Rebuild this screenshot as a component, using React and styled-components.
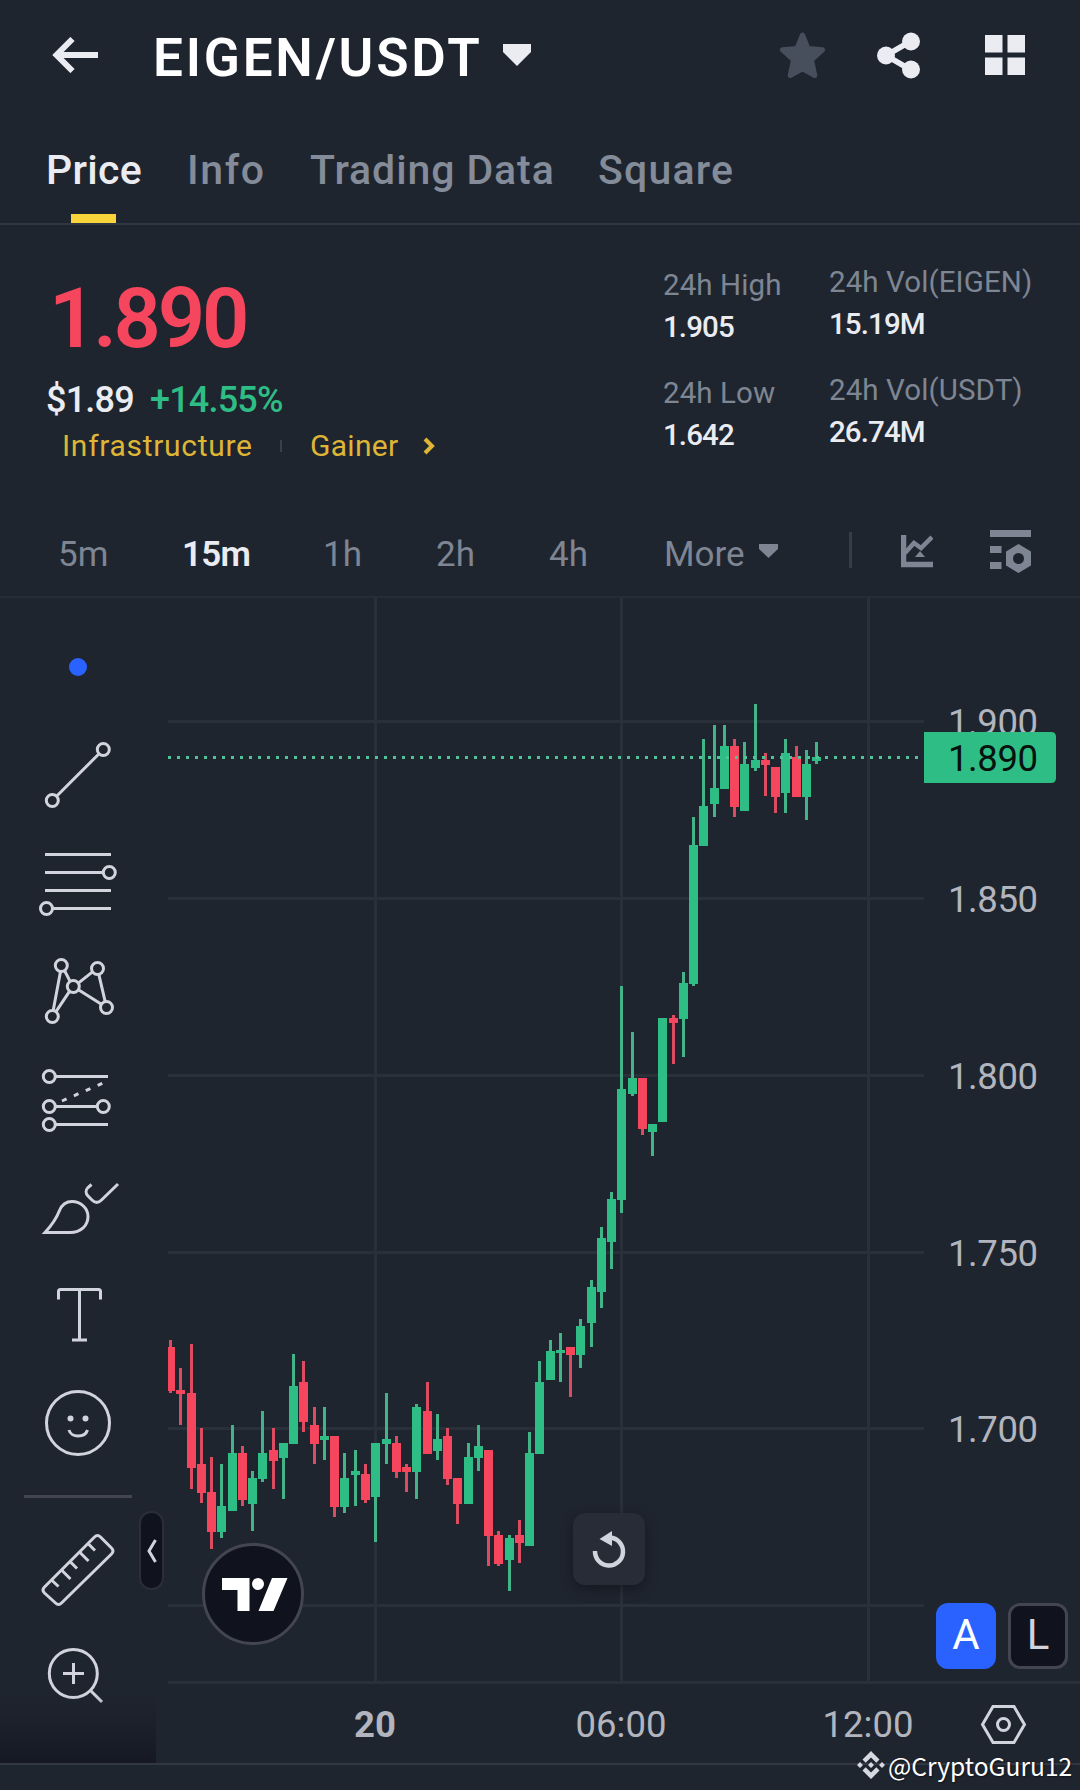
import React, { useState } from 'react';
import styled, { createGlobalStyle } from 'styled-components';

const GlobalStyle = createGlobalStyle`
  * {
    box-sizing: border-box;
  }

  body {
    margin: 0;
    background: #1f252f;
    font-family: Roboto, 'Liberation Sans', sans-serif;
  }

  svg {
    display: block;
  }
`;

const Screen = styled.main`
  position: relative;
  width: 1080px;
  height: 1790px;
  overflow: hidden;
  background: #1f252f;
  color: #eaecf2;
`;

const Header = styled.header`
  display: flex;
  align-items: center;
  height: 110px;
  padding: 0 55px 0 52px;
`;

const Title = styled.h1`
  width: 350px;
  margin: 5px 0 0 54px;
  color: #fff;
  font-size: 53px;
  font-weight: 600;
  line-height: 60px;
  letter-spacing: 2.8px;
  white-space: nowrap;
`;

const HeaderActions = styled.div`
  display: flex;
  align-items: center;
  margin-left: auto;

  svg + svg {
    margin-left: 52px;
  }

  svg:last-child {
    margin-left: 65px;
  }
`;

const Tabs = styled.nav`
  display: grid;
  grid-template-columns: 141px 123px 288px auto;
  height: 115px;
  padding-left: 46px;
  border-bottom: 2px solid #303742;
`;

const Tab = styled.div`
  display: flex;
  flex-direction: column;
  justify-content: space-between;
  padding-top: 35px;
  color: ${props => (props.$active ? '#eaecf2' : '#848b99')};
  font-size: 41px;
  font-weight: 500;
  line-height: 50px;
  letter-spacing: ${props => props.$spacing}px;
  white-space: nowrap;

  &::after {
    content: '';
    width: 45px;
    height: 9px;
    margin-left: 25px;
    background: ${props => (props.$active ? '#f8d33a' : 'transparent')};
  }
`;

const Summary = styled.section`
  display: grid;
  grid-template-columns: 663px 166px auto;
  height: 285px;
`;

const PriceBlock = styled.div`
  padding: 54px 0 0 46px;
`;

const LastPrice = styled.div`
  padding-left: 3px;
  color: #f6465d;
  font-size: 83px;
  font-weight: 600;
  line-height: 80px;
  letter-spacing: -3.2px;
`;

const PriceChange = styled.div`
  display: flex;
  margin-top: 21px;
  font-size: 36px;
  font-weight: 500;
  line-height: 40px;
  letter-spacing: -0.8px;
`;

const Fiat = styled.span`
  width: 104px;
`;

const Percent = styled.span`
  color: #2ebd85;
`;

const Tags = styled.div`
  display: flex;
  align-items: center;
  margin: 8px 0 0 16px;
  color: #deb535;
  font-size: 30px;
  line-height: 36px;
`;

const Tag = styled.span`
  width: ${props => props.$width}px;
  letter-spacing: ${props => props.$spacing}px;
`;

const TagDivider = styled.span`
  width: 2px;
  height: 12px;
  margin-right: 28px;
  background: #3a404b;
`;

const StatColumn = styled.div`
  padding-top: ${props => props.$top}px;
`;

const Stat = styled.div`
  margin-bottom: 24px;
  font-size: 29.5px;
  line-height: 42px;
  white-space: nowrap;
`;

const StatLabel = styled.div`
  color: #7e8593;
  letter-spacing: 0.1px;
`;

const StatValue = styled.div`
  font-weight: 500;
  letter-spacing: -0.9px;
`;

const Intervals = styled.nav`
  display: grid;
  grid-template-columns: 124px 141px 113px 113px 115px 95px 90px 52px 89px auto;
  align-items: center;
  height: 88px;
  padding-left: 58px;
  border-bottom: 2px solid #272d37;
`;

const Interval = styled.span`
  padding-top: 3px;
  color: ${props => (props.$active ? '#eaecf2' : '#7e8593')};
  font-size: 35px;
  font-weight: ${props => (props.$active ? 600 : 400)};
  line-height: 40px;
  letter-spacing: ${props => (props.$active ? -0.8 : 0)}px;
`;

const IntervalDivider = styled.span`
  width: 3px;
  height: 36px;
  margin-bottom: 6px;
  background: #363c48;
`;

const ChartArea = styled.section`
  position: relative;
  display: grid;
  grid-template-columns: 168px 912px;
  height: 1167px;
  border-bottom: 2px solid #323843;
`;

const Toolbar = styled.aside`
  display: flex;
  flex-direction: column;
`;

const Dot = styled.span`
  width: 18px;
  height: 18px;
  margin: 60px 0 45px 69px;
  border-radius: 50%;
  background: #2962ff;
`;

const ToolIcon = styled.svg`
  flex: none;
  width: 156px;
  height: 108px;
  fill: none;
  stroke: #d1d4dc;
  stroke-width: 3;
`;

const ToolDivider = styled.span`
  width: 108px;
  height: 3px;
  margin: 18px 0 18px 24px;
  background: #434651;
`;

const ToolbarFade = styled.div`
  position: absolute;
  left: 0;
  bottom: 0;
  width: 156px;
  height: 68px;
  background: linear-gradient(rgba(22, 25, 35, 0), #161923);
`;

const Collapse = styled.button`
  position: absolute;
  left: 139px;
  top: 913px;
  display: grid;
  place-items: center;
  width: 25px;
  height: 79px;
  padding: 0;
  border: 2px solid #2a2e39;
  border-radius: 12px;
  background: #10131d;
`;

const Brand = styled.div`
  position: absolute;
  left: 202px;
  top: 945px;
  display: grid;
  place-items: center;
  width: 102px;
  height: 102px;
  padding-left: 3px;
  border: 3px solid #434651;
  border-radius: 50%;
  background: #10131d;
`;

const ResetButton = styled.button`
  position: absolute;
  left: 573px;
  top: 915px;
  display: grid;
  place-items: center;
  width: 72px;
  height: 72px;
  padding: 3px 0 0;
  border: 0;
  border-radius: 12px;
  background: #272c36;
  box-shadow: 0 4px 12px rgba(10, 12, 20, 0.5);
`;

const ScaleButtons = styled.div`
  position: absolute;
  left: 936px;
  top: 1005px;
  display: flex;
  gap: 12px;
`;

const ScaleButton = styled.button`
  width: 60px;
  height: 66px;
  padding: 0 0 2px;
  border: 3px solid ${props => (props.$on ? '#2962ff' : '#434651')};
  border-radius: 12px;
  background: ${props => (props.$on ? '#2962ff' : '#10131d')};
  color: ${props => (props.$on ? '#fff' : '#d1d4dc')};
  font-family: inherit;
  font-size: 42px;
  line-height: 58px;
`;

const Watermark = styled.div`
  position: absolute;
  left: 857px;
  top: 1747px;
  display: flex;
  align-items: center;
  gap: 3px;
  height: 36px;
  color: #fff;
  font-family: 'Noto Sans CJK SC', 'Noto Sans', sans-serif;
  font-size: 24.6px;
  line-height: 36px;
  text-shadow: 1px 1px 2px rgba(0, 0, 0, 0.5);
`;

const AxisText = styled.text`
  fill: ${props => props.$fill || '#b2b5be'};
  font-size: 36.5px;
  font-weight: ${props => (props.$bold ? 700 : 400)};
`;

const UP = '#2ebd85';
const DOWN = '#f6465d';

// each band: [rising, high, body top, body bottom, low], in thirds of a pixel below base
const bands = [
  {
    base: 1300,
    rows: [
      [0, 120, 141, 272, 278], [0, 204, 269, 281, 375], [0, 132, 279, 503, 567],
      [0, 384, 492, 578, 608], [0, 471, 576, 695, 746], [1, 492, 618, 695, 713],
      [1, 375, 459, 632, 632], [0, 438, 459, 599, 617], [1, 513, 534, 611, 692],
      [1, 333, 459, 537, 545], [0, 384, 450, 482, 567], [1, 429, 429, 473, 597],
      [1, 162, 258, 431, 431], [0, 183, 246, 365, 395], [0, 321, 375, 431, 491],
      [1, 321, 408, 419, 479], [0, 408, 408, 620, 650], [1, 459, 534, 620, 638],
      [1, 450, 513, 524, 617], [0, 492, 522, 599, 608], [1, 429, 429, 590, 725],
      [1, 279, 417, 431, 491], [0, 408, 429, 515, 533], [0, 492, 501, 515, 575],
      [1, 312, 321, 515, 597],
    ],
  },
  {
    base: 1260,
    rows: [
      [0, 366, 453, 581, 581], [1, 462, 537, 572, 599], [0, 504, 528, 656, 674],
      [0, 654, 654, 731, 791], [1, 549, 591, 731, 731], [1, 495, 558, 594, 632],
      [0, 570, 570, 827, 917], [0, 813, 825, 911, 917], [1, 825, 834, 899, 992],
      [0, 780, 825, 849, 908], [1, 516, 579, 857, 857], [1, 303, 366, 581, 581],
      [1, 240, 273, 359, 359], [1, 219, 269, 279, 366], [0, 261, 261, 285, 410],
      [1, 177, 198, 285, 323], [1, 60, 81, 188, 260],
    ],
  },
  {
    base: 960,
    rows: [
      [1, 801, 834, 996, 1043], [1, 696, 717, 845, 926], [1, 78, 387, 719, 758],
      [1, 216, 354, 402, 407], [0, 354, 354, 506, 524], [1, 492, 492, 516, 587],
      [1, 174, 174, 486, 486], [0, 165, 174, 188, 311], [1, 36, 69, 177, 291],
    ],
  },
  {
    base: 680,
    rows: [
      [1, 411, 495, 912, 917], [1, 177, 378, 497, 497], [1, 135, 324, 371, 410],
      [1, 135, 198, 326, 326], [0, 177, 198, 380, 410], [1, 186, 252, 392, 392],
      [1, 72, 240, 263, 272], [0, 219, 240, 255, 348], [0, 261, 261, 350, 399],
      [1, 177, 219, 338, 399], [0, 198, 231, 350, 350], [1, 210, 252, 350, 419],
      [1, 186, 231, 243, 251],
    ],
  },
];

const candles = bands.flatMap(band =>
  band.rows.map(([up, ...ys]) => [up, ...ys.map(y => Math.round(band.base + y / 3))])
);

const priceLines = [
  [720, '1.900'], [897, '1.850'], [1074, '1.800'],
  [1251, '1.750'], [1427, '1.700'], [1604, null],
];

const timeLines = [[375, '20'], [621, '06:00'], [868, '12:00']];

const tabs = [['Price', 0.3], ['Info', 1.6], ['Trading Data', 0.9], ['Square', 1.2]];

function Candle({ index, data }) {
  const [up, high, top, bottom, low] = data;
  const x = Math.floor(170.65 + 10.255 * index);
  return (
    <g>
      <rect x={x - 1} y={high} width="3" height={low - high} fill={up ? '#43b487' : '#dc4c61'} />
      <rect x={x - 4} y={top} width="9" height={bottom - top} fill={up ? UP : DOWN} />
    </g>
  );
}

function CandleChart() {
  return (
    <svg width="912" height="1165" viewBox="168 598 912 1165">
      <g fill="#2a303a">
        {priceLines.map(([y]) => <rect key={y} x="168" y={y} width="756" height="3" />)}
        {timeLines.map(([x]) => <rect key={x} x={x - 1} y="598" width="3" height="1083" />)}
        <rect x="168" y="1681" width="912" height="3" />
      </g>
      {candles.map((data, i) => <Candle key={i} index={i} data={data} />)}
      <line x1="168" x2="921" y1="757.5" y2="757.5" stroke="#4fc496" strokeWidth="3" strokeDasharray="3 6" />
      {priceLines.filter(([, label]) => label).map(([y, label]) => (
        <AxisText key={label} x="948" y={y + 14.5} textLength="90">{label}</AxisText>
      ))}
      <path d="M924 732h127q5 0 5 5v41q0 5-5 5H924z" fill={UP} />
      <AxisText x="948" y="771" textLength="90" $fill="#07110d">1.890</AxisText>
      {timeLines.map(([x, label]) => (
        <AxisText key={label} x={x} y="1737" textAnchor="middle" $bold={label === '20'}>{label}</AxisText>
      ))}
      <g fill="none" stroke="#d1d4dc" strokeWidth="3">
        <path d="M993 1706.500h21l10.500 18-10.500 18h-21l-10.500-18z" />
        <circle cx="1003.500" cy="1724.500" r="6" />
      </g>
    </svg>
  );
}

function DrawingTools() {
  return (
    <Toolbar>
      <Dot />
      <ToolIcon viewBox="0 0 156 108">
        <circle cx="52.300" cy="79.500" r="6" />
        <circle cx="103.300" cy="28.500" r="6" />
        <path d="M56.800 75l42-42" />
      </ToolIcon>
      <ToolIcon viewBox="0 0 156 108">
        <path d="M45 25.500h66M45 43.500h58M45 61.500h66M53 79.500h58" />
        <circle cx="109.300" cy="43.500" r="6" />
        <circle cx="46.500" cy="79.500" r="6" />
      </ToolIcon>
      <ToolIcon viewBox="0 0 156 108">
        <circle cx="61.300" cy="28.500" r="6" />
        <circle cx="97.500" cy="31.500" r="6" />
        <circle cx="73.300" cy="49.500" r="6" />
        <circle cx="106.500" cy="70.500" r="6" />
        <circle cx="52.300" cy="79.500" r="6" />
        <path d="M60.500 34.500l-7.300 39M64.500 33.500l5.600 10.900M56 74.700l13.500-20.400M78.300 46.200l14.200-11.400M78.400 52.700l23 14.600M98.800 37.400l6.400 27.200" />
      </ToolIcon>
      <ToolIcon viewBox="0 0 156 108">
        <circle cx="49.300" cy="31.500" r="6" />
        <circle cx="49.300" cy="61.500" r="6" />
        <circle cx="103.300" cy="61.500" r="6" />
        <circle cx="49.300" cy="79.500" r="6" />
        <path d="M55.500 31.500H108M55.500 61.500h42M55.500 79.500H108" />
        <path d="M62 56l42-18.500" strokeDasharray="5 8" />
      </ToolIcon>
      <ToolIcon viewBox="0 0 156 108">
        <path d="M45 79.500h25c11 0 18-7 18-16 0-8-7-15-16-15-6 0-10 3-12.500 9C57 64 51 73 45 79.500z" />
        <path d="M91.500 31.500l-3.500 3c-2.500 2.500-2.500 6 0 8.500l4 4c3 3 6.500 3 9.500 0l16.500-16" />
      </ToolIcon>
      <ToolIcon viewBox="0 0 156 108">
        <path d="M58.500 38.500v-8q0-2 2-2h38q2 0 2 2v8M79.500 28.500v50M72 79h15" />
      </ToolIcon>
      <ToolIcon viewBox="0 0 156 108">
        <circle cx="78" cy="54" r="31.500" />
        <path d="M69 61c2 8 16 8 18.500 0" />
        <circle cx="70.500" cy="49.500" r="3" fill="#d1d4dc" stroke="none" />
        <circle cx="85.500" cy="49.500" r="3" fill="#d1d4dc" stroke="none" />
      </ToolIcon>
      <ToolDivider />
      <ToolIcon viewBox="0 0 156 108">
        <path d="M44.500 71l50-50q3-3 6 0l11 11q3 3 0 6l-50 49q-3 3-6 0l-11-10q-3-3 0-6z" />
        <path d="M51.500 64l7 6.500M61.500 54l9 9M70 45.500l7 7M79.500 36l9 9M88 27.500l7 7" />
      </ToolIcon>
      <ToolIcon viewBox="0 0 156 108">
        <circle cx="73.300" cy="49.500" r="24" />
        <path d="M90.500 66.500l11.500 11.500M63 49.500h21M73.500 39v21" />
      </ToolIcon>
    </Toolbar>
  );
}

function App() {
  const [interval, setActiveInterval] = useState('15m');
  const [tab, setTab] = useState('Price');

  return (
    <Screen>
      <GlobalStyle />
      <Header>
        <svg width="47" height="36" viewBox="0 0 47 36" fill="none" stroke="#eaecf2" strokeWidth="6">
          <path d="M46 18H5M20.500 2L4.500 18l16 16" />
        </svg>
        <Title>EIGEN/USDT</Title>
        <svg width="28" height="22" viewBox="0 0 28 22" fill="#eaecf2">
          <path d="M0 0h28v8L14 22 0 8z" />
        </svg>
        <HeaderActions>
          <svg width="45" height="47" viewBox="0 0 45 47" fill="#474f5d" stroke="#474f5d" strokeWidth="5" strokeLinejoin="round">
            <path d="M22.500 3l5.500 13.500 14.500 1.300-11 10.200 3.300 15.500-12.300-6.700-12.300 6.700L13.500 28l-11-10.200L17 16.500z" />
          </svg>
          <svg width="43" height="47" viewBox="0 0 43 47" fill="#eaecf2">
            <path d="M34 9L9 23.500 34 38" fill="none" stroke="#eaecf2" strokeWidth="5.500" />
            <circle cx="34" cy="9.500" r="9" />
            <circle cx="9" cy="23.500" r="9" />
            <circle cx="34" cy="37.500" r="9" />
          </svg>
          <svg width="40" height="40" viewBox="0 0 40 40" fill="#eaecf2">
            <path d="M0 0h17.500v17.500H0zM22.500 0H40v17.500H22.500zM0 22.500h17.500V40H0zM22.500 22.500H40V40H22.500z" />
          </svg>
        </HeaderActions>
      </Header>

      <Tabs>
        {tabs.map(([name, spacing]) => (
          <Tab key={name} $active={tab === name} $spacing={spacing} onClick={() => setTab(name)}>{name}</Tab>
        ))}
      </Tabs>

      <Summary>
        <PriceBlock>
          <LastPrice>1.890</LastPrice>
          <PriceChange>
            <Fiat>$1.89</Fiat>
            <Percent>+14.55%</Percent>
          </PriceChange>
          <Tags>
            <Tag $width={218} $spacing={0.7}>Infrastructure</Tag>
            <TagDivider />
            <Tag $width={113} $spacing={0.3}>Gainer</Tag>
            <svg width="12" height="18" viewBox="0 0 12 18" fill="none" stroke="#deb535" strokeWidth="4">
              <path d="M2 2l7 7-7 7" />
            </svg>
          </Tags>
        </PriceBlock>
        <StatColumn $top={39}>
          <Stat>
            <StatLabel>24h High</StatLabel>
            <StatValue>1.905</StatValue>
          </Stat>
          <Stat>
            <StatLabel>24h Low</StatLabel>
            <StatValue>1.642</StatValue>
          </Stat>
        </StatColumn>
        <StatColumn $top={36}>
          <Stat>
            <StatLabel>24h Vol(EIGEN)</StatLabel>
            <StatValue>15.19M</StatValue>
          </Stat>
          <Stat>
            <StatLabel>24h Vol(USDT)</StatLabel>
            <StatValue>26.74M</StatValue>
          </Stat>
        </StatColumn>
      </Summary>

      <Intervals>
        {['5m', '15m', '1h', '2h', '4h', 'More'].map(name => (
          <Interval key={name} $active={interval === name} onClick={() => setActiveInterval(name)}>{name}</Interval>
        ))}
        <svg width="19" height="19" viewBox="0 0 19 19" fill="#7e8593">
          <path d="M0 0h19v5l-9.500 9L0 5z" />
        </svg>
        <IntervalDivider />
        <svg width="32" height="36" viewBox="0 0 32 36" fill="none" stroke="#7e8593" strokeWidth="5">
          <path d="M2.500 0v29.500H32" strokeWidth="5.500" />
          <path d="M4 18l9-10 7 5L31 2" strokeWidth="4.500" />
          <path d="M14 22l5-6 5 6z" fill="#7e8593" stroke="none" />
        </svg>
        <svg width="42" height="46" viewBox="0 0 42 46" fill="#7e8593">
          <path d="M0 0h41v7H0zM0 16h11.500v7H0zM0 32h11.500v7H0z" />
          <path fillRule="evenodd" d="M28.500 14L41 21.500v14L28.500 43 16 35.500v-14zM28.500 23a5.500 5.500 0 1 0 0 11 5.500 5.500 0 0 0 0-11z" />
        </svg>
      </Intervals>

      <ChartArea>
        <DrawingTools />
        <CandleChart />
        <ToolbarFade />
        <Collapse>
          <svg width="10" height="24" viewBox="0 0 10 24" fill="none" stroke="#d1d4dc" strokeWidth="3">
            <path d="M8.500 1L2 12l6.500 11" />
          </svg>
        </Collapse>
        <Brand>
          <svg width="66" height="33" viewBox="0 0 66 33" fill="#fff">
            <path d="M0 0h27.500v33H15.500V12H0zM50 0h15.500L51.500 33h-15z" />
            <circle cx="36" cy="6" r="6" />
          </svg>
        </Brand>
        <ResetButton>
          <svg width="36" height="42" viewBox="0 0 36 42" fill="none" stroke="#d1d4dc" strokeWidth="4.500">
            <path d="M4 21a14 14 0 1 0 15-13.500" />
            <path d="M8.500 9L21 1v15z" fill="#d1d4dc" stroke="none" />
          </svg>
        </ResetButton>
        <ScaleButtons>
          <ScaleButton $on>A</ScaleButton>
          <ScaleButton>L</ScaleButton>
        </ScaleButtons>
      </ChartArea>

      <Watermark>
        <svg width="28" height="28" viewBox="0 0 28 28" fill="#d5d9e2">
          <path d="M14 0l8.500 8.500-3.200 3.200L14 6.400l-5.300 5.300-3.200-3.200zM14 28l-8.500-8.500 3.200-3.200 5.300 5.300 5.300-5.300 3.200 3.200zM14 11l3 3-3 3-3-3zM3 11l3 3-3 3-3-3zM25 11l3 3-3 3-3-3z" />
        </svg>
        <span>@CryptoGuru12</span>
      </Watermark>
    </Screen>
  );
}

export default App;
